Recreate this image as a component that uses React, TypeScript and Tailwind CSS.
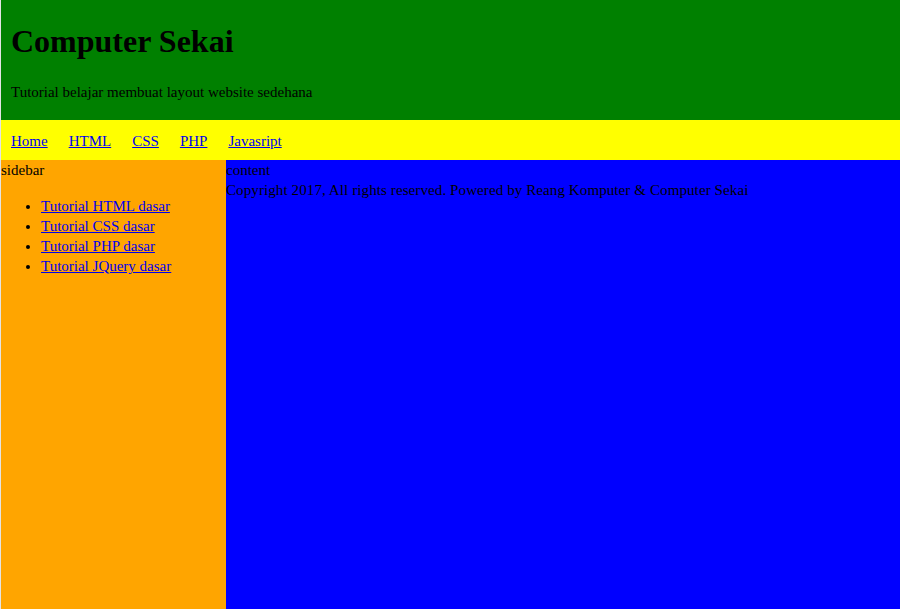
const NAV_LINKS = ['Home', 'HTML', 'CSS', 'PHP', 'Javasript'];

const TUTORIALS = [
  'Tutorial HTML dasar',
  'Tutorial CSS dasar',
  'Tutorial PHP dasar',
  'Tutorial JQuery dasar',
];

export default function App() {
  return (
    <div className="flex h-[609px] w-[900px] overflow-hidden bg-white font-['Liberation_Serif','Times_New_Roman',serif] text-[15px] text-black">
      {/* thin light edge seen on the left of the shot */}
      <div className="w-px shrink-0 bg-[#e4e4e4]" />

      <div className="flex min-w-0 flex-1 flex-col">
        <header className="h-[120px] shrink-0 bg-[#008000] px-[10px] pt-[23px]">
          <h1 className="text-[32px] font-bold leading-[37px]">Computer Sekai</h1>
          <p className="mt-[23px] leading-[18px]">Tutorial belajar membuat layout website sedehana</p>
        </header>

        <nav className="flex h-[40px] shrink-0 items-center gap-[21px] bg-[#ffff00] px-[10px] pt-px">
          {NAV_LINKS.map(link => (
            <a key={link} href="#" className="leading-[18px] text-[#0000ee] underline">
              {link}
            </a>
          ))}
        </nav>

        <div className="flex flex-1">
          <aside className="w-[225px] shrink-0 bg-[#ffa500]">
            <div className="leading-[20px]">sidebar</div>
            <ul className="mt-[16px] list-disc pl-[40px]">
              {TUTORIALS.map(item => (
                <li key={item} className="leading-[20px]">
                  <a href="#" className="text-[#0000ee] underline">
                    {item}
                  </a>
                </li>
              ))}
            </ul>
          </aside>

          <main className="flex-1 bg-[#0000ff] leading-[20px]">
            <div>content</div>
            <div className="tracking-[0.1px]">
              Copyright 2017, All rights reserved. Powered by Reang Komputer &amp; Computer Sekai
            </div>
          </main>
        </div>
      </div>
    </div>
  );
}
